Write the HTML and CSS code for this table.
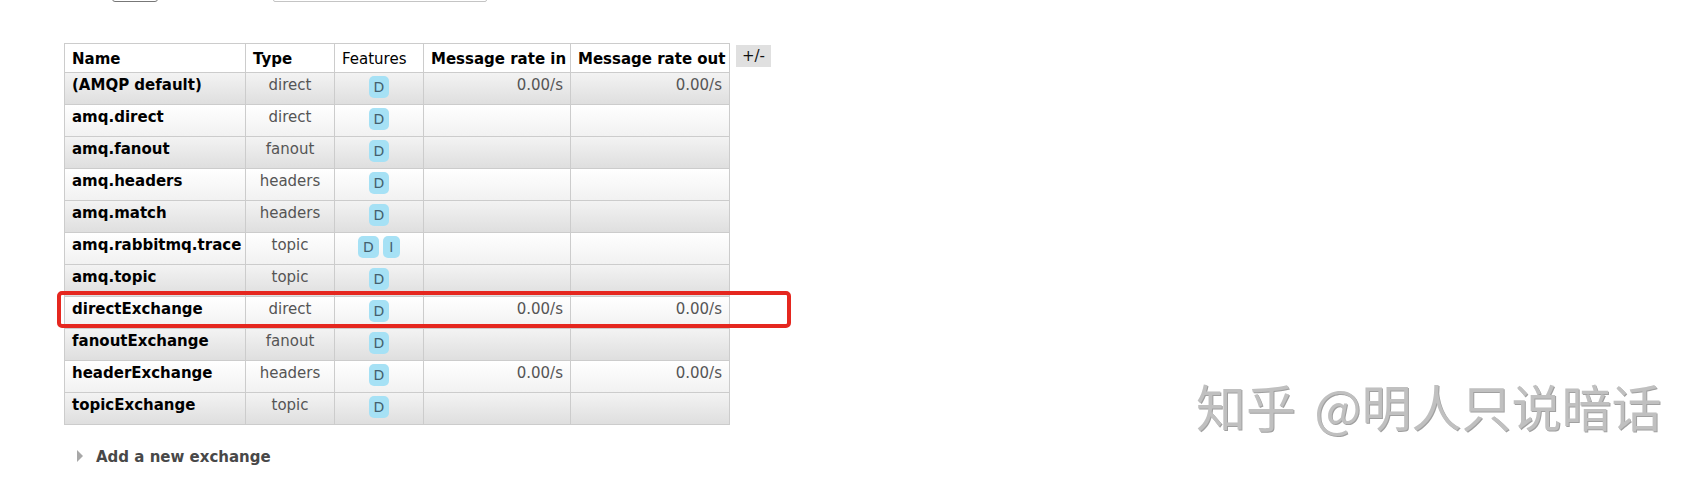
FILE: index.html
```html
<!DOCTYPE html>
<html lang="en">
<head>
<meta charset="utf-8">
<title>Exchanges</title>
<link rel="stylesheet" href="styles.css">
</head>
<body>
<div class="page">
  <div class="top-strip"><span class="btn"></span><span class="field"></span></div>
  <div class="list-area">
    <div class="table-wrap">
      <table class="list">
        <colgroup>
          <col class="c-name"><col class="c-type"><col class="c-feat"><col class="c-in"><col class="c-out">
        </colgroup>
        <thead>
          <tr><th>Name</th><th>Type</th><th class="plain">Features</th><th>Message rate in</th><th>Message rate out</th></tr>
        </thead>
        <tbody>
          <tr class="alt1"><td class="name">(AMQP default)</td><td class="type">direct</td><td class="feat"><div class="feats"><abbr class="badge">D</abbr></div></td><td class="rate">0.00/s</td><td class="rate">0.00/s</td></tr>
          <tr class="alt2"><td class="name">amq.direct</td><td class="type">direct</td><td class="feat"><div class="feats"><abbr class="badge">D</abbr></div></td><td class="rate"></td><td class="rate"></td></tr>
          <tr class="alt1"><td class="name">amq.fanout</td><td class="type">fanout</td><td class="feat"><div class="feats"><abbr class="badge">D</abbr></div></td><td class="rate"></td><td class="rate"></td></tr>
          <tr class="alt2"><td class="name">amq.headers</td><td class="type">headers</td><td class="feat"><div class="feats"><abbr class="badge">D</abbr></div></td><td class="rate"></td><td class="rate"></td></tr>
          <tr class="alt1"><td class="name">amq.match</td><td class="type">headers</td><td class="feat"><div class="feats"><abbr class="badge">D</abbr></div></td><td class="rate"></td><td class="rate"></td></tr>
          <tr class="alt2"><td class="name">amq.rabbitmq.trace</td><td class="type">topic</td><td class="feat"><div class="feats"><abbr class="badge">D</abbr><abbr class="badge">I</abbr></div></td><td class="rate"></td><td class="rate"></td></tr>
          <tr class="alt1"><td class="name">amq.topic</td><td class="type">topic</td><td class="feat"><div class="feats"><abbr class="badge">D</abbr></div></td><td class="rate"></td><td class="rate"></td></tr>
          <tr class="alt2"><td class="name">directExchange</td><td class="type">direct</td><td class="feat"><div class="feats"><abbr class="badge">D</abbr></div></td><td class="rate">0.00/s</td><td class="rate">0.00/s</td></tr>
          <tr class="alt1"><td class="name">fanoutExchange</td><td class="type">fanout</td><td class="feat"><div class="feats"><abbr class="badge">D</abbr></div></td><td class="rate"></td><td class="rate"></td></tr>
          <tr class="alt2"><td class="name">headerExchange</td><td class="type">headers</td><td class="feat"><div class="feats"><abbr class="badge">D</abbr></div></td><td class="rate">0.00/s</td><td class="rate">0.00/s</td></tr>
          <tr class="alt1"><td class="name">topicExchange</td><td class="type">topic</td><td class="feat"><div class="feats"><abbr class="badge">D</abbr></div></td><td class="rate"></td><td class="rate"></td></tr>
        </tbody>
      </table>
      <div class="highlight"></div>
    </div>
    <span class="plus-minus">+/-</span>
  </div>
  <h2 class="add"><span class="arrow"></span>Add a new exchange</h2>
</div>
<div class="watermark">知乎 <span class="wm-handle">@明人只说暗话</span></div>
</body>
</html>
```
FILE: styles.css
```css
html, body {
  margin: 0;
  padding: 0;
}
body {
  width: 1703px;
  height: 477px;
  overflow: hidden;
  position: relative;
  background: #fff;
  color: #000;
  font-family: "DejaVu Sans", Verdana, sans-serif;
  font-size: 15px;
  line-height: 18px;
}
.page {
  padding-left: 64px;
}
.top-strip {
  height: 2px;
  overflow: hidden;
  display: flex;
  align-items: flex-end;
  margin-left: 48px;
}
.btn {
  flex: none;
  width: 46px;
  height: 20px;
  box-sizing: border-box;
  border: 1px solid #777;
  border-radius: 3px;
}
.field {
  flex: none;
  margin-left: 115px;
  width: 214px;
  height: 20px;
  box-sizing: border-box;
  border: 1px solid #c4c4c4;
  border-radius: 2px;
}
.list-area {
  display: flex;
  align-items: flex-start;
  margin-top: 41px;
}
.table-wrap {
  position: relative;
}
table.list {
  border-collapse: collapse;
  table-layout: fixed;
  width: 666px;
}
.c-name { width: 181px; }
.c-type { width: 89px; }
.c-feat { width: 89px; }
.c-in { width: 147px; }
.c-out { width: 159px; }
table.list th,
table.list td {
  border: 1px solid #cccccc;
  white-space: nowrap;
  vertical-align: top;
}
table.list th {
  height: 22px;
  padding: 6px 7px 0;
  text-align: left;
  font-weight: bold;
  background: #fff;
}
table.list th.plain {
  font-weight: normal;
}
table.list td {
  height: 28px;
  padding: 3px 7px 0;
}
tr.alt1 {
  background: linear-gradient(#f3f3f3, #dedede);
}
tr.alt2 {
  background: linear-gradient(#ffffff, #f1f1f1);
}
td.name {
  font-weight: bold;
  color: #000;
}
td.type {
  text-align: center;
  color: #555;
}
td.rate {
  text-align: right;
  color: #555;
}
.feats {
  display: flex;
  justify-content: center;
  gap: 4px;
}
.badge {
  display: block;
  min-width: 7px;
  height: 22px;
  line-height: 22px;
  padding: 0 5px;
  border-radius: 5px;
  background: #a6e1f5;
  color: #43606e;
  font-size: 14px;
  text-align: center;
  text-decoration: none;
}
.highlight {
  position: absolute;
  left: -7px;
  top: 248px;
  width: 734px;
  height: 37px;
  box-sizing: border-box;
  border: 4px solid #e5271f;
  border-radius: 5px;
  pointer-events: none;
}
.plus-minus {
  flex: none;
  margin: 2px 0 0 6px;
  height: 22px;
  line-height: 22px;
  padding: 0 6px;
  background: #e0e0e0;
  color: #111;
}
.add {
  display: flex;
  align-items: center;
  gap: 13px;
  margin: 23px 0 0 13px;
  font-size: 15px;
  line-height: 18px;
  font-weight: bold;
  color: #484848;
}
.arrow {
  flex: none;
  width: 0;
  height: 0;
  margin-top: -3px;
  border-left: 6px solid #a8a8a8;
  border-top: 6.5px solid transparent;
  border-bottom: 6.5px solid transparent;
}
.watermark {
  position: absolute;
  left: 1196px;
  top: 380px;
  font-family: "Noto Sans CJK SC", sans-serif;
  font-size: 50px;
  line-height: 50px;
  color: #c0c0c0;
  text-shadow: 1px 1px 0 #a0a0a0;
  white-space: nowrap;
}
.wm-handle {
  margin-left: 7px;
}
```
